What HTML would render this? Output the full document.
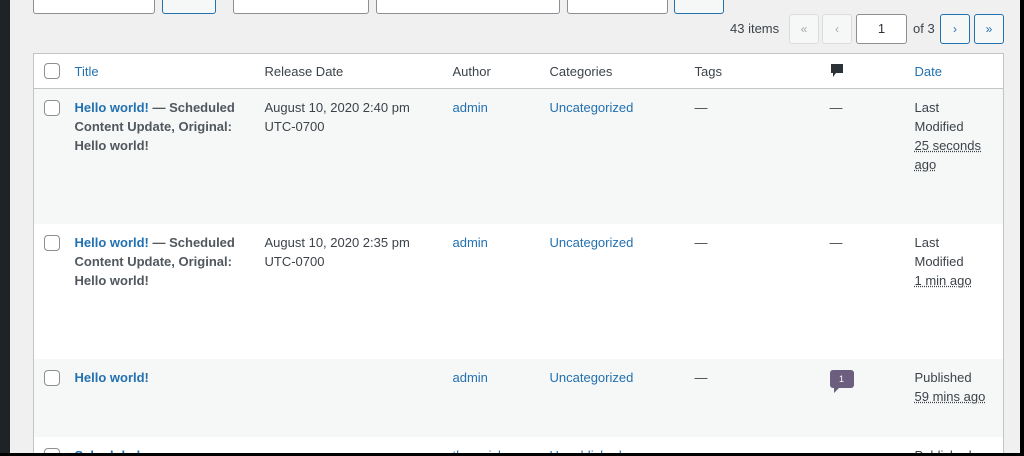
<!DOCTYPE html>
<html><head><style>
*{box-sizing:border-box;margin:0;padding:0}
body{width:1024px;height:456px;background:#000;position:relative;overflow:hidden;font-family:"Liberation Sans",sans-serif;font-size:13px;color:#3c434a}
#wrap{position:absolute;left:0;top:0;width:1020px;height:453px;background:#f0f0f1;overflow:hidden}
#side{position:absolute;left:0;top:0;width:10px;height:453px;background:#1d2327}
.btn{position:absolute;top:-8px;height:22px;border:1px solid #8c8f94;border-radius:3px;background:#fff}
.blue{border-color:#2271b1;background:#f6f7f7}
.pg{position:absolute;top:14px;width:30px;height:30px;border:1px solid #dcdcde;border-radius:3px;background:#f6f7f7;color:#a7aaad;text-align:center;line-height:28px;font-size:12px}
.pg.a{border-color:#2271b1;color:#2271b1}
table{position:absolute;left:33px;top:53px;width:971px;border-collapse:collapse;border:1px solid #c3c4c7;background:#fff}
td,th{vertical-align:top;text-align:left;font-weight:normal;line-height:19px;padding:9px 0 0}
th{height:20px;border-bottom:1px solid #c3c4c7;padding:8px 0 4px}
.cb{width:16px;height:16px;border:1px solid #8c8f94;border-radius:4px;background:#fff;margin:2px 0 0 10px}
a{color:#2271b1;text-decoration:none}
.t a{font-weight:bold}
.t{color:#50575e;font-weight:bold}
.u{text-decoration:underline dotted}
tr.g td{background:#f6f7f7}
.bub{display:inline-block;position:relative;background:#6c5e7f;color:#fff;font-size:9px;width:24px;height:18px;border-radius:3px;text-align:center;line-height:18px;margin-top:1px}
.bub:after{content:"";position:absolute;left:4px;bottom:-5px;border-left:5px solid #6c5e7f;border-bottom:5px solid transparent}
</style></head><body>
<div id="wrap">
<div id="side"></div>
<div class="btn" style="left:33px;width:122px"></div>
<div class="btn blue" style="left:162px;width:54px"></div>
<div class="btn" style="left:233px;width:136px"></div>
<div class="btn" style="left:376px;width:184px"></div>
<div class="btn" style="left:567px;width:101px"></div>
<div class="btn blue" style="left:674px;width:50px"></div>
<div style="position:absolute;left:730px;top:21px">43 items</div>
<div class="pg" style="left:789px">«</div>
<div class="pg" style="left:822px">‹</div>
<div class="pg" style="left:856px;width:51px;background:#fff;border-color:#8c8f94;color:#2c3338;font-size:13px">1</div>
<div style="position:absolute;left:913px;top:21px">of 3</div>
<div class="pg a" style="left:940px">›</div>
<div class="pg a" style="left:974px">»</div>
<table>
<tr style="height:32px"><th style="width:41px"><div class="cb" style="margin-top:1px"></div></th><th style="width:190px"><a>Title</a></th><th style="width:188px">Release Date</th><th style="width:97px">Author</th><th style="width:145px">Categories</th><th style="width:135px">Tags</th><th style="width:85px"><svg width="14" height="16" viewBox="0 0 14 16" style="margin-top:1px"><path d="M1 1h12v9H6l-3 4v-4H1z" fill="#2c3338"/></svg></th><th><a>Date</a></th></tr>
<tr class="g" style="height:135px"><td><div class="cb"></div></td><td class="t" style="padding-right:8px"><a>Hello world!</a> — Scheduled Content Update, Original: Hello world!</td><td>August 10, 2020 2:40 pm<br>UTC-0700</td><td><a>admin</a></td><td><a>Uncategorized</a></td><td>—</td><td>—</td><td>Last<br>Modified<br><span class="u">25 seconds<br>ago</span></td></tr>
<tr style="height:135px"><td><div class="cb"></div></td><td class="t" style="padding-right:8px"><a>Hello world!</a> — Scheduled Content Update, Original: Hello world!</td><td>August 10, 2020 2:35 pm<br>UTC-0700</td><td><a>admin</a></td><td><a>Uncategorized</a></td><td>—</td><td>—</td><td>Last<br>Modified<br><span class="u">1 min ago</span></td></tr>
<tr class="g" style="height:78px"><td><div class="cb"></div></td><td class="t"><a>Hello world!</a></td><td></td><td><a>admin</a></td><td><a>Uncategorized</a></td><td>—</td><td><span class="bub">1</span></td><td>Published<br><span class="u">59 mins ago</span></td></tr>
<tr style="height:40px"><td><div class="cb"></div></td><td class="t"><a>Scheduled</a></td><td></td><td><a>themeisle</a></td><td><a>Unpublished</a></td><td>—</td><td></td><td>Published</td></tr>
</table>
</div>
</body></html>
